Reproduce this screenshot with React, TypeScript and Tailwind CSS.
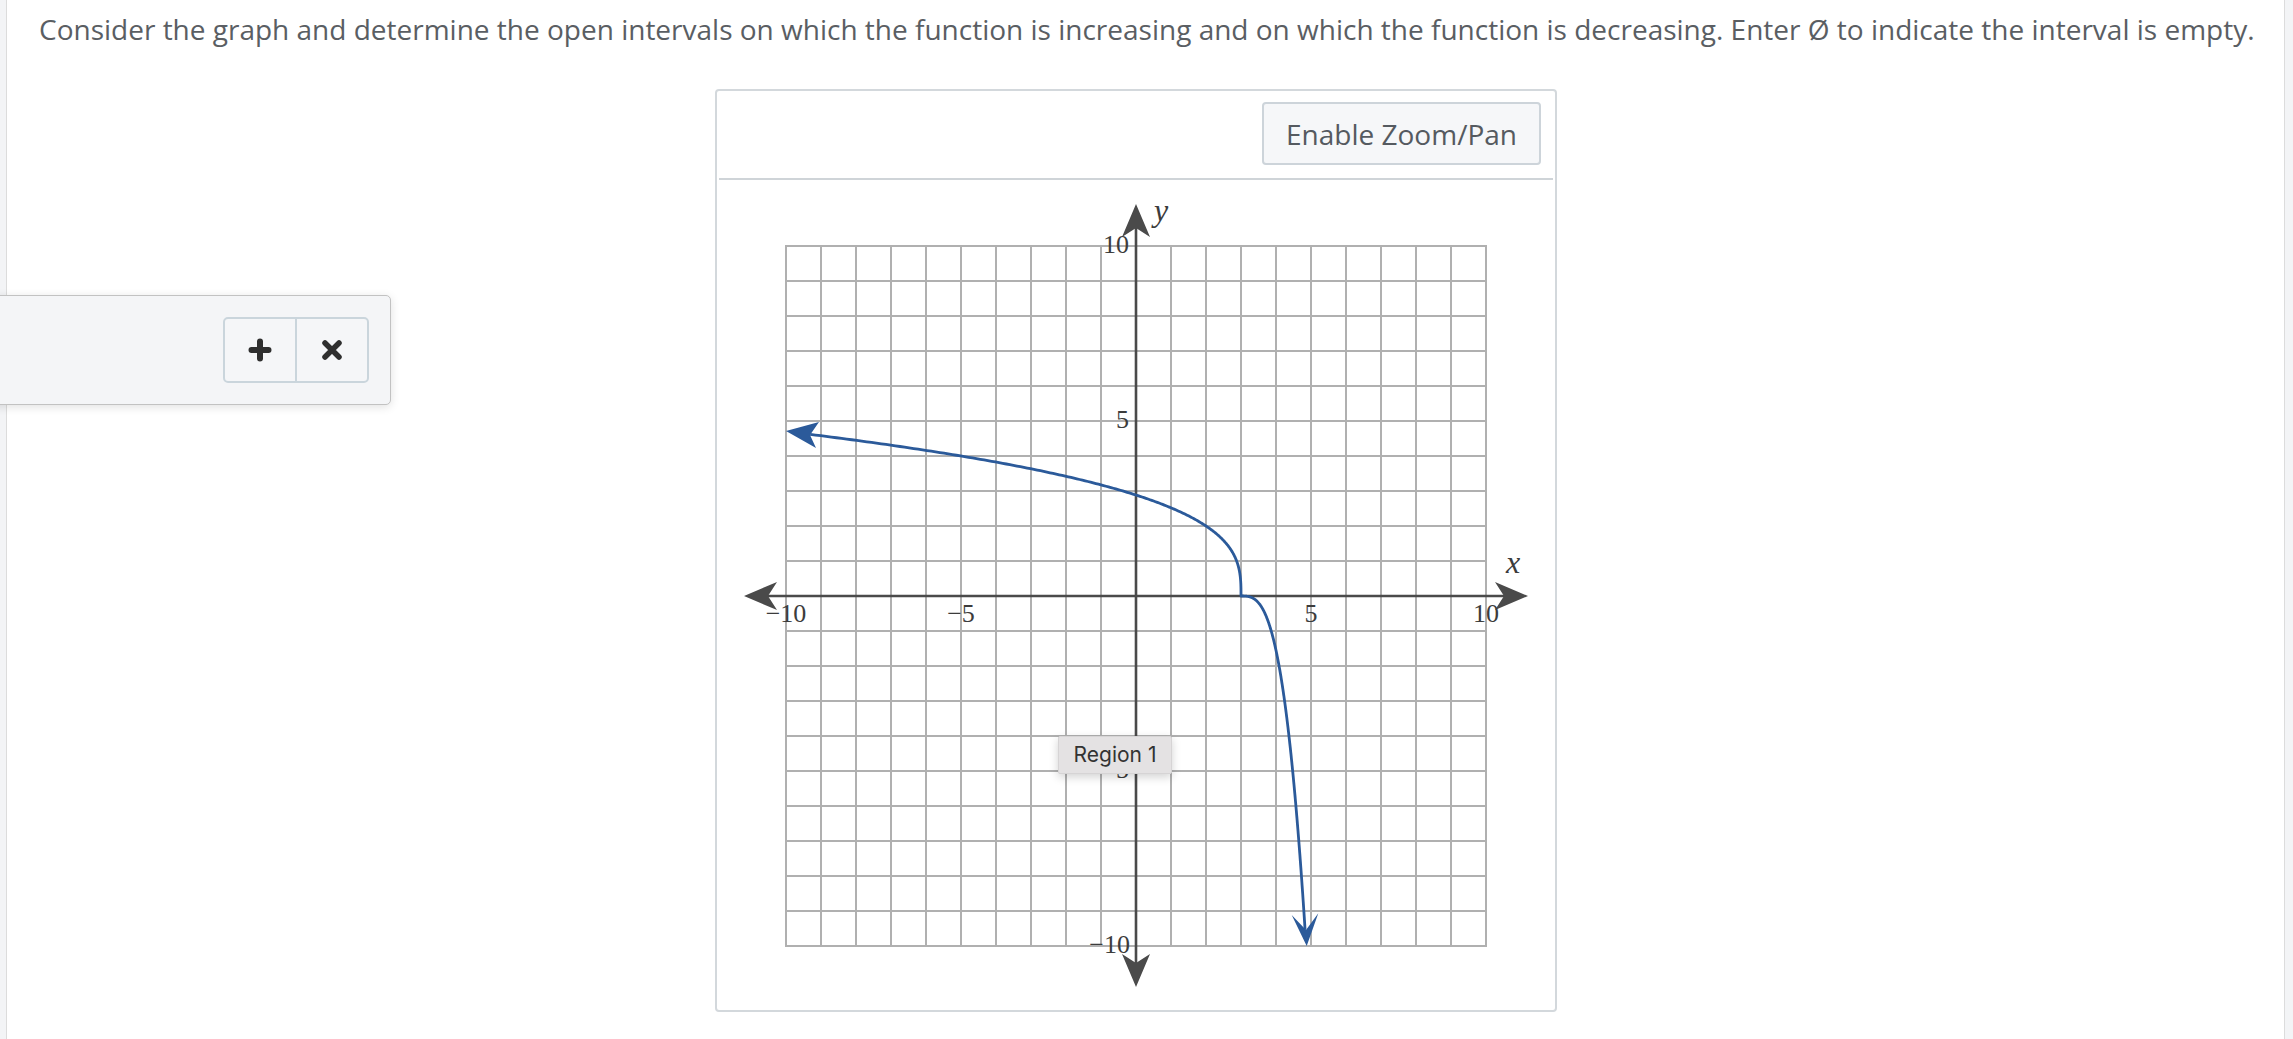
const X = (x: number) => 1136 + 35 * x;
const Y = (y: number) => 596 - 35 * y;
const GRID = Array.from({ length: 21 }, (_, i) => i);

function curvePath() {
  const pts: string[] = [];
  const u0 = Math.cbrt(3 + 9.31);
  const n = 240;
  for (let i = 0; i <= n; i++) {
    const u = u0 - (u0 * i) / n;
    const x = 3 - u * u * u;
    const y = 2 * u;
    pts.push(`${X(x).toFixed(2)},${Y(y).toFixed(2)}`);
  }
  const m = 300;
  for (let i = 1; i <= m; i++) {
    const v = (1.831 * i) / m;
    const x = 3 + v;
    const y = -1.554 * v * v * v;
    pts.push(`${X(x).toFixed(2)},${Y(y).toFixed(2)}`);
  }
  return "M" + pts.join(" L");
}

function PlusIcon() {
  return (
    <svg width={24} height={24} viewBox="0 0 24 24">
      <path d="M12 3.5 V20.5 M3.5 12 H20.5" stroke="#2f2f2f" strokeWidth={6} strokeLinecap="round" fill="none" />
    </svg>
  );
}

function TimesIcon() {
  return (
    <svg width={22} height={22} viewBox="0 0 22 22">
      <path d="M4 4 L18 18 M18 4 L4 18" stroke="#2f2f2f" strokeWidth={5.5} strokeLinecap="round" fill="none" />
    </svg>
  );
}

function Graph() {
  const axis = "#4a4a4a";
  const grid = "#b0b0b0";
  const blue = "#2b5a9a";
  return (
    <svg width={838} height={830} viewBox="717 180 838 830" className="block">
      {GRID.map((i) => (
        <line key={"v" + i} x1={786 + 35 * i} y1={246} x2={786 + 35 * i} y2={946} stroke={grid} strokeWidth={2} />
      ))}
      {GRID.map((i) => (
        <line key={"h" + i} x1={785} y1={246 + 35 * i} x2={1487} y2={246 + 35 * i} stroke={grid} strokeWidth={2} />
      ))}
      <line x1={766} y1={596} x2={1506} y2={596} stroke={axis} strokeWidth={2.6} />
      <line x1={1136} y1={226} x2={1136} y2={965} stroke={axis} strokeWidth={2.6} />
      <polygon points="744,596 777,582 768,596 777,610" fill={axis} />
      <polygon points="1528,596 1495,582 1504,596 1495,610" fill={axis} />
      <polygon points="1136,204 1122,237 1136,228 1150,237" fill={axis} />
      <polygon points="1136,987 1122,954 1136,963 1150,954" fill={axis} />
      <g fill="#3c3c3c" className="font-['Liberation_Serif',serif] text-[26px]">
        <text x={786} y={622} textAnchor="middle">−10</text>
        <text x={961} y={622} textAnchor="middle">−5</text>
        <text x={1311} y={622} textAnchor="middle">5</text>
        <text x={1486} y={622} textAnchor="middle">10</text>
        <text x={1129} y={253} textAnchor="end">10</text>
        <text x={1129} y={428} textAnchor="end">5</text>
        <text x={1129} y={778} textAnchor="end">−5</text>
        <text x={1130} y={953} textAnchor="end">−10</text>
      </g>
      <g fill="#3c3c3c" className="font-['Liberation_Serif',serif] italic text-[32px]">
        <text x={1154} y={221}>y</text>
        <text x={1506} y={573}>x</text>
      </g>
      <path d={curvePath()} fill="none" stroke={blue} strokeWidth={2.8} strokeLinejoin="round" />
      <polygon points="786,431 819,422 810,435 816,448" fill={blue} />
      <polygon points="1306.7,946 1291.7,915 1306,930 1318.3,913.3" fill={blue} />
    </svg>
  );
}

export default function App() {
  return (
    <div className="relative h-[1039px] w-full overflow-hidden bg-[#f3f4f6] font-['Open_Sans',sans-serif]">
      <div className="ml-[6px] mr-[8px] h-full border-x border-[#dcdcdc] bg-white">
        <p className="pl-[32px] pt-[9px] text-[28px] leading-[41px] text-[#5a5e63] whitespace-nowrap">
          Consider the graph and determine the open intervals on which the function is increasing and on which the
          function is decreasing. Enter Ø to indicate the interval is empty.
        </p>
        <div className="relative ml-[708px] mt-[39px] h-[923px] w-[842px] rounded-[4px] border-2 border-[#d3d8dc] bg-white">
          <div className="flex justify-end pt-[11px] pr-[14px] pb-[13px]">
            <button className="h-[63px] w-[279px] rounded-[4px] border-2 border-[#cdd4da] bg-[#f6f7f9] text-[28px] text-[#555a60]">
              Enable Zoom/Pan
            </button>
          </div>
          <div className="mx-[2px] h-[2px] bg-[#cfd4d8]" />
          <Graph />
          <div className="absolute left-[341px] top-[645px] flex h-[38px] w-[114px] items-center justify-center rounded-[2px] border border-[#d6d4d5] bg-[#e4e2e3] text-[21px] text-[#333] font-['Inter',sans-serif] shadow-[0_3px_10px_rgba(0,0,0,0.18)]">
            Region 1
          </div>
        </div>
      </div>
      <div className="absolute left-[-10px] top-[295px] flex h-[110px] w-[401px] items-center justify-end rounded-[5px] border-[1.5px] border-[#c2c2c2] bg-[#f4f5f7] pr-[21px] shadow-[0_2px_10px_rgba(0,0,0,0.12)]">
        <div className="flex h-[66px] overflow-hidden rounded-[5px] border-2 border-[#cad5dc] bg-[#f5f6f8]">
          <button className="flex w-[70px] items-center justify-center">
            <PlusIcon />
          </button>
          <div className="w-[2px] bg-[#cad5dc]" />
          <button className="flex w-[70px] items-center justify-center">
            <TimesIcon />
          </button>
        </div>
      </div>
    </div>
  );
}
